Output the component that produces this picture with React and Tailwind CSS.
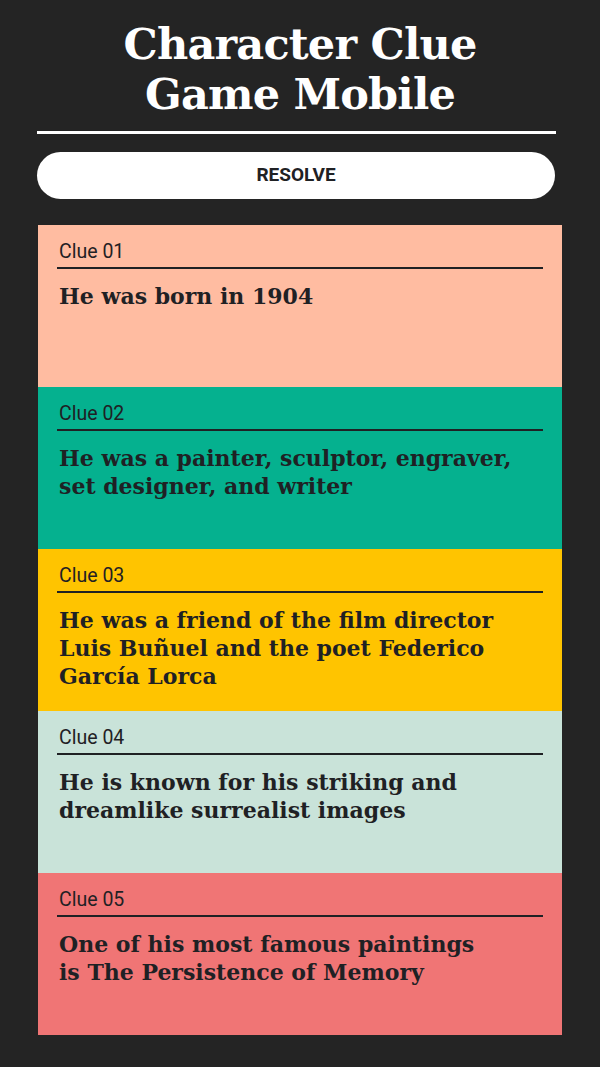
import React from 'react';

const clues = [
  { id: '01', lines: ['He was born in 1904'], bg: 'bg-[#ffbca1]' },
  { id: '02', lines: ['He was a painter, sculptor, engraver,', 'set designer, and writer'], bg: 'bg-[#05b18f]' },
  {
    id: '03',
    lines: ['He was a friend of the film director', 'Luis Buñuel and the poet Federico', 'García Lorca'],
    bg: 'bg-[#ffc400]',
  },
  { id: '04', lines: ['He is known for his striking and', 'dreamlike surrealist images'], bg: 'bg-[#c9e3d9]' },
  { id: '05', lines: ['One of his most famous paintings', 'is The Persistence of Memory'], bg: 'bg-[#f07575]' },
];

function ClueCard({ clue }) {
  return (
    <div className={`${clue.bg} h-[162px] px-[19px] pt-[15px]`}>
      <p className="font-['Roboto',sans-serif] text-[19.5px] leading-[24px] text-[#1f2124] pl-[2px] pb-[3px] border-b-2 border-[#1f2124]">
        Clue {clue.id}
      </p>
      <h2 className="mt-[13px] pl-[2px] font-['DejaVu_Serif',serif] font-bold text-[22px] leading-[28px] text-[#1f2124] whitespace-nowrap">
        {clue.lines.map((line, i) => (
          <span key={i} className="block">
            {line}
          </span>
        ))}
      </h2>
    </div>
  );
}

export default function App() {
  return (
    <div className="min-h-screen bg-[#242424] px-[37px] pt-[19px] pb-[32px]">
      <h1 className="text-center text-white font-['DejaVu_Serif',serif] font-bold text-[43px] leading-[50px] tracking-[-0.8px]">
        Character Clue
        <br />
        Game Mobile
      </h1>

      <div className="mt-[12px] h-[3px] w-[519px] bg-white" />

      <button className="mt-[18px] w-[518px] h-[47px] rounded-full bg-white font-['Roboto',sans-serif] font-bold text-[19px] text-[#1f2124]">
        RESOLVE
      </button>

      <div className="mt-[26px] ml-px w-[524px]">
        {clues.map((clue) => (
          <ClueCard key={clue.id} clue={clue} />
        ))}
      </div>
    </div>
  );
}
